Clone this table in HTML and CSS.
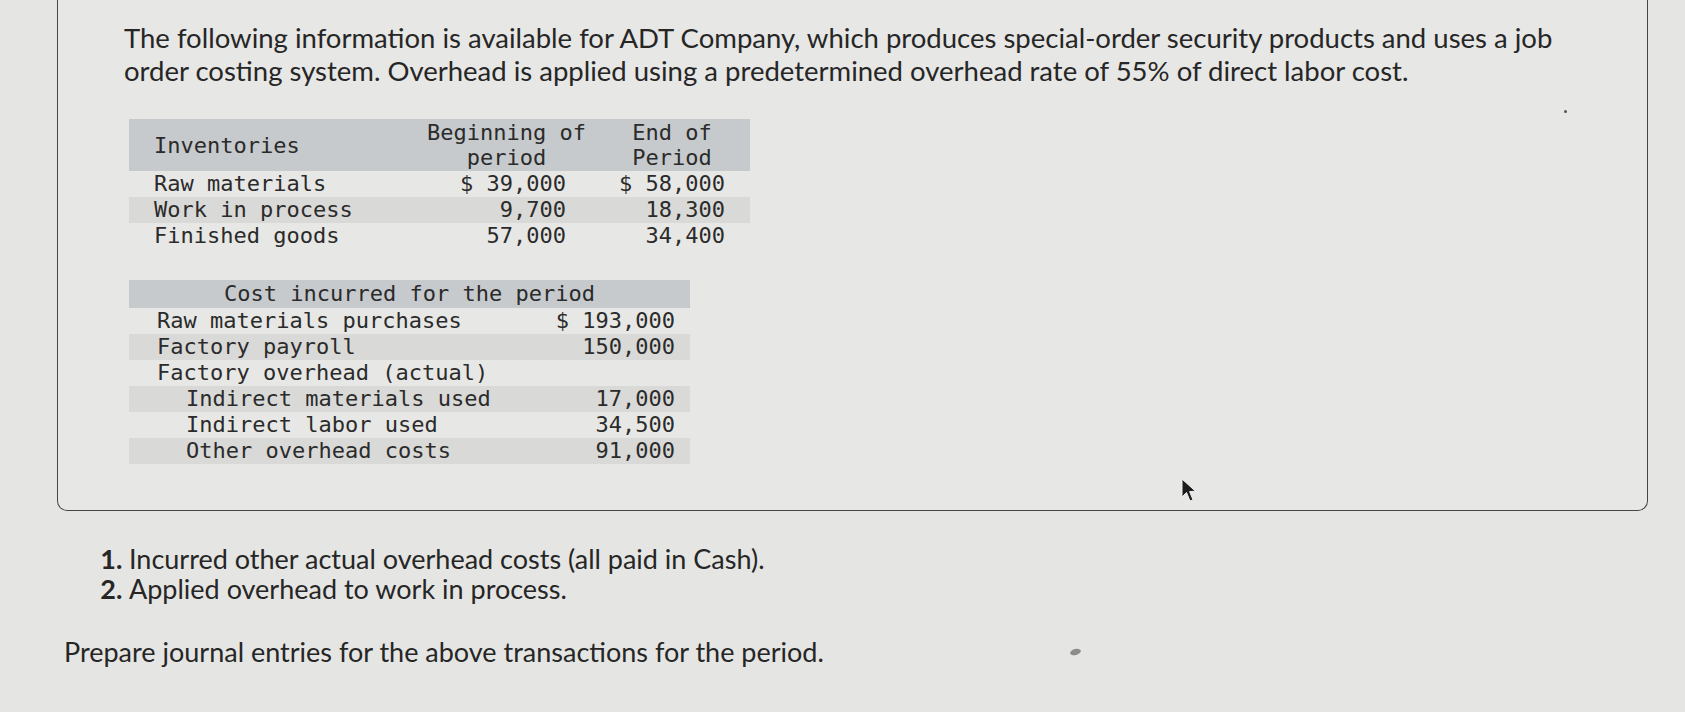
FILE: index.html
```html
<!DOCTYPE html>
<html lang="en">
<head>
<meta charset="utf-8">
<title>ADT Company – Job order costing</title>
<link rel="stylesheet" href="styles.css">
</head>
<body>
<div class="page">
  <section class="card">
    <p class="intro">The following information is available for ADT Company, which produces special-order security products and uses a job order costing system. Overhead is applied using a predetermined overhead rate of 55% of direct labor cost.</p>

    <table class="data inv">
      <colgroup><col class="i1"><col class="i2"><col class="i3"></colgroup>
      <thead>
        <tr><th class="lab">Inventories</th><th class="ctr">Beginning of<br>period</th><th class="ctr end">End of<br>Period</th></tr>
      </thead>
      <tbody>
        <tr><td class="lab">Raw materials</td><td class="num n2">$ 39,000</td><td class="num n3">$ 58,000</td></tr>
        <tr class="alt"><td class="lab">Work in process</td><td class="num n2">9,700</td><td class="num n3">18,300</td></tr>
        <tr><td class="lab">Finished goods</td><td class="num n2">57,000</td><td class="num n3">34,400</td></tr>
      </tbody>
    </table>

    <table class="data cost">
      <colgroup><col class="k1"><col class="k2"></colgroup>
      <thead>
        <tr><th colspan="2" class="ctr">Cost incurred for the period</th></tr>
      </thead>
      <tbody>
        <tr><td class="lab">Raw materials purchases</td><td class="num">$ 193,000</td></tr>
        <tr class="alt"><td class="lab">Factory payroll</td><td class="num">150,000</td></tr>
        <tr><td class="lab">Factory overhead (actual)</td><td class="num"></td></tr>
        <tr class="alt"><td class="lab sub">Indirect materials used</td><td class="num">17,000</td></tr>
        <tr><td class="lab sub">Indirect labor used</td><td class="num">34,500</td></tr>
        <tr class="alt"><td class="lab sub">Other overhead costs</td><td class="num">91,000</td></tr>
      </tbody>
    </table>
  </section>

  <ol class="tasks">
    <li>Incurred other actual overhead costs (all paid in Cash).</li>
    <li>Applied overhead to work in process.</li>
  </ol>

  <p class="prompt">Prepare journal entries for the above transactions for the period.</p>

  <svg class="cursor" width="16" height="26" viewBox="0 0 16 26" aria-hidden="true">
    <path d="M1 1 L1 19 L5.5 14.5 L9 23 L12 21.8 L8.6 13.6 L14.5 13.2 Z" fill="#1e1e1e" stroke="#f2f2f2" stroke-width="1"/>
  </svg>
  <span class="speck s1"></span>
  <span class="speck s2"></span>
</div>
</body>
</html>
```

FILE: styles.css
```css
html, body {
  margin: 0;
  padding: 0;
}

body {
  background: #e5e5e3;
  color: #262626;
  font-family: "Lato", "Open Sans", "Liberation Sans", sans-serif;
  width: 1685px;
  height: 712px;
  overflow: hidden;
}

.page {
  position: relative;
  height: 712px;
}

.card {
  margin-left: 57px;
  width: 1591px;
  border: 1.5px solid #46464a;
  border-top: none;
  border-radius: 0 0 10px 10px;
  padding: 21px 0 46px 66px;
  box-sizing: border-box;
  background: #e7e7e5;
}

.intro {
  margin: 0;
  width: 1450px;
  font-size: 27.5px;
  line-height: 33px;
  color: #262626;
}

.data {
  border-collapse: collapse;
  border-spacing: 0;
  table-layout: fixed;
  margin-left: 5px;
  font-family: "DejaVu Sans Mono", "Liberation Mono", monospace;
  font-size: 22px;
  color: #2b2b2b;
}

.data th {
  font-weight: normal;
  background: #c7cacd;
  padding: 0;
}

.data td {
  padding: 0;
  line-height: 26px;
  height: 26px;
}

.data tr.alt td {
  background: #d9d9d7;
}

.inv {
  width: 621px;
  margin-top: 32px;
}

.inv .i1 { width: 278px; }
.inv .i2 { width: 199px; }
.inv .i3 { width: 144px; }

.inv th {
  line-height: 25px;
  height: 52px;
  vertical-align: middle;
}

.inv th.end {
  padding-right: 12px;
}

.lab {
  text-align: left;
  padding-left: 25px !important;
  white-space: pre;
}

.ctr {
  text-align: center;
}

.num {
  text-align: right;
  white-space: pre;
}

.inv .n2 { padding-right: 40px; }
.inv .n3 { padding-right: 25px; }

.cost {
  width: 561px;
  margin-top: 31px;
}

.cost .k1 { width: 390px; }
.cost .k2 { width: 171px; }

.cost th {
  line-height: 28px;
  height: 28px;
}

.cost .lab {
  padding-left: 28px !important;
}

.cost .lab.sub {
  padding-left: 57px !important;
}

.cost .num {
  padding-right: 15px;
}

.tasks {
  margin: 33px 0 0 0;
  padding-left: 129px;
  font-size: 27px;
  line-height: 30px;
  color: #262626;
}

.tasks li::marker {
  font-weight: bold;
}

.prompt {
  margin: 33px 0 0 64px;
  font-size: 27px;
  line-height: 30px;
  color: #262626;
}

.cursor {
  position: absolute;
  left: 1181px;
  top: 478px;
}

.speck {
  position: absolute;
  border-radius: 50%;
  background: #777;
}

.s1 {
  left: 1070px;
  top: 649px;
  width: 11px;
  height: 6px;
  background: #8c8c8a;
  transform: rotate(-15deg);
}

.s2 {
  left: 1564px;
  top: 110px;
  width: 3px;
  height: 3px;
  background: #555;
}
```
